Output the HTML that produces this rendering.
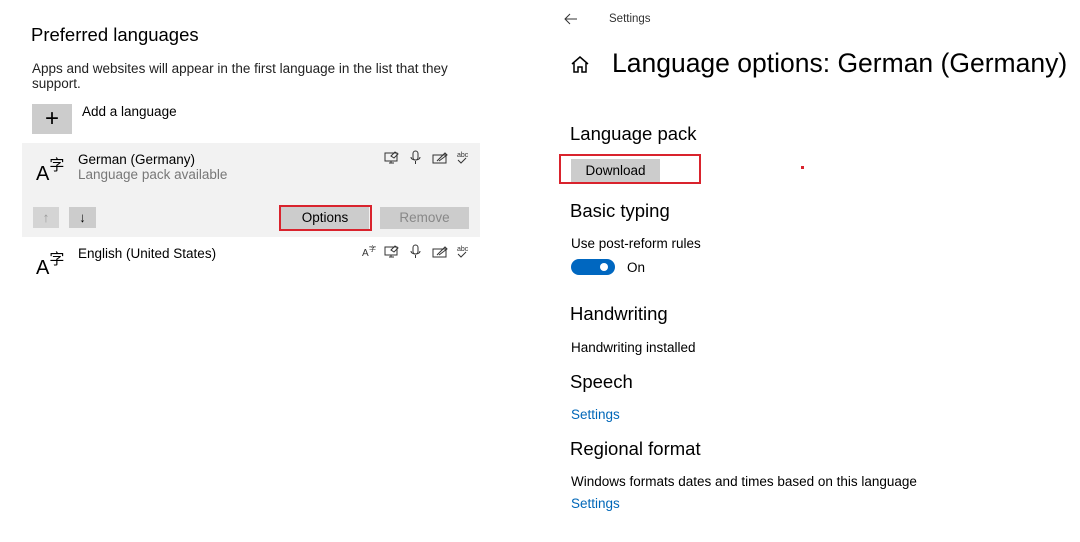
<!DOCTYPE html>
<html><head><meta charset="utf-8"><style>
body{margin:0;width:1080px;height:542px;background:#fff;position:relative;overflow:hidden;font-family:"Liberation Sans","Noto Sans CJK SC",sans-serif;color:#000}
.a{position:absolute;white-space:nowrap}
.h{font-size:18.5px}
.s{font-size:13.5px}
.btn{position:absolute;background:#ccc;font-size:13.5px;text-align:center}
.red{position:absolute;border:2px solid #d9232d;box-sizing:border-box}
.link{color:#0067b8}
svg{position:absolute}
</style></head><body>
<div class="a h" style="left:31px;top:24px">Preferred languages</div>
<div class="a s" style="left:32px;top:61px;line-height:15px;color:#222">Apps and websites will appear in the first language in the list that they<br>support.</div>
<div class="btn" style="left:32px;top:104px;width:40px;height:30px;background:#ccc;font-size:24px;line-height:30px;font-weight:300">+</div>
<div class="a s" style="left:82px;top:104px">Add a language</div>
<div class="a" style="left:22px;top:143px;width:458px;height:94px;background:#f2f2f2"></div>
<div class="a" style="left:36px;top:155px"><span style="font-size:20px;position:relative;top:8px">A</span><span style="font-size:15px;position:relative;top:-2px">字</span></div>
<div class="a s" style="left:78px;top:152px">German (Germany)</div>
<div class="a s" style="left:78px;top:167px;color:#777">Language pack available</div>
<svg style="left:384px;top:150px" width="88" height="16" viewBox="0 0 88 16" fill="none" stroke="#333" stroke-width="1">
<rect x="1" y="3" width="12" height="8"/><path d="M5 13h5M7 11v2M7 6l4-4 3 2-4 4z"/>
<rect x="29" y="1" width="5" height="9" rx="2.5"/><path d="M27 7c0 4 9 4 9 0M31.5 11v3"/>
<rect x="49" y="5" width="13" height="8"/><path d="M53 11l8-8 2 2-8 6"/>
<text x="73" y="7" font-size="7" fill="#333" stroke="none" font-family="Liberation Sans">abc</text><path d="M74 10l3 3 5-5"/>
</svg>
<div class="btn" style="left:33px;top:207px;width:26px;height:21px;background:#d4d4d4;color:#999;line-height:21px">↑</div>
<div class="btn" style="left:69px;top:207px;width:27px;height:21px;line-height:21px">↓</div>
<div class="btn" style="left:281px;top:207px;width:88px;height:22px;line-height:22px">Options</div>
<div class="red" style="left:279px;top:205px;width:93px;height:26px"></div>
<div class="btn" style="left:380px;top:207px;width:89px;height:22px;line-height:22px;color:#888">Remove</div>
<div class="a" style="left:36px;top:249px"><span style="font-size:20px;position:relative;top:8px">A</span><span style="font-size:15px;position:relative;top:-2px">字</span></div>
<div class="a s" style="left:78px;top:246px">English (United States)</div>
<svg style="left:362px;top:244px" width="110" height="16" viewBox="0 0 110 16" fill="none" stroke="#333" stroke-width="1">
<text x="0" y="12" font-size="10" fill="#333" stroke="none" font-family="Liberation Sans">A</text><text x="7" y="7" font-size="7" fill="#333" stroke="none" font-family="Noto Sans CJK SC">字</text>
<g transform="translate(22,0)">
<rect x="1" y="3" width="12" height="8"/><path d="M5 13h5M7 11v2M7 6l4-4 3 2-4 4z"/>
<rect x="29" y="1" width="5" height="9" rx="2.5"/><path d="M27 7c0 4 9 4 9 0M31.5 11v3"/>
<rect x="49" y="5" width="13" height="8"/><path d="M53 11l8-8 2 2-8 6"/>
<text x="73" y="7" font-size="7" fill="#333" stroke="none" font-family="Liberation Sans">abc</text><path d="M74 10l3 3 5-5"/>
</g></svg>

<svg style="left:564px;top:13px" width="14" height="12" viewBox="0 0 14 12" fill="none" stroke="#333"><path d="M13 6H1M6 1L1 6l5 5"/></svg>
<div class="a" style="left:609px;top:13px;font-size:11.5px;color:#333">Settings</div>
<svg style="left:571px;top:56px" width="18" height="17" viewBox="0 0 18 17" fill="none" stroke="#000" stroke-width="1.5"><path d="M1 8L9 1l8 7M3 7v9h4v-5h4v5h4V7"/></svg>
<div class="a" style="left:612px;top:48px;font-size:26.5px">Language options: German (Germany)</div>
<div class="a h" style="left:570px;top:123px">Language pack</div>
<div class="btn" style="left:571px;top:159px;width:89px;height:23px;line-height:24px">Download</div>
<div class="red" style="left:559px;top:154px;width:142px;height:30px"></div>
<div class="a" style="left:801px;top:166px;width:3px;height:3px;background:#d9232d"></div>
<div class="a h" style="left:570px;top:200px">Basic typing</div>
<div class="a s" style="left:571px;top:236px">Use post-reform rules</div>
<div class="a" style="left:571px;top:259px;width:44px;height:16px;border-radius:8px;background:#0067c0"></div>
<div class="a" style="left:600px;top:263px;width:8px;height:8px;border-radius:50%;background:#fff"></div>
<div class="a s" style="left:627px;top:260px">On</div>
<div class="a h" style="left:570px;top:303px">Handwriting</div>
<div class="a s" style="left:571px;top:340px">Handwriting installed</div>
<div class="a h" style="left:570px;top:371px">Speech</div>
<div class="a s link" style="left:571px;top:407px">Settings</div>
<div class="a h" style="left:570px;top:438px">Regional format</div>
<div class="a s" style="left:571px;top:474px">Windows formats dates and times based on this language</div>
<div class="a s link" style="left:571px;top:496px">Settings</div>
</body></html>
